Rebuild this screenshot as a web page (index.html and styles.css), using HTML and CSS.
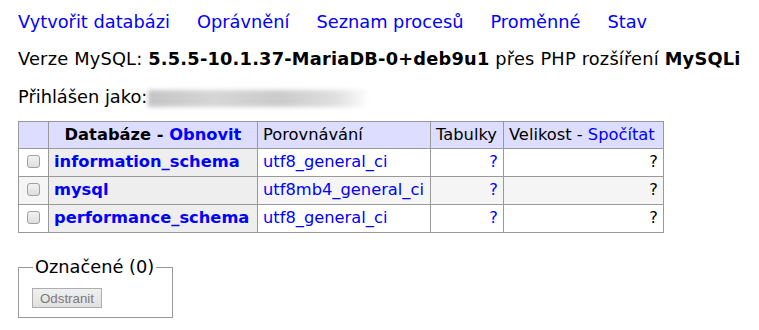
FILE: index.html
```html
<!DOCTYPE html>
<html lang="cs">
<head>
<meta charset="utf-8">
<link rel="stylesheet" href="styles.css">
</head>
<body>
<div class="content">
  <p class="links">
    <a href="#">Vytvořit databázi</a>
    <a href="#">Oprávnění</a>
    <a href="#">Seznam procesů</a>
    <a href="#">Proměnné</a>
    <a href="#">Stav</a>
  </p>
  <p class="line ver">Verze MySQL: <b>5.5.5-10.1.37-MariaDB-0+deb9u1</b> přes PHP rozšíření <b>MySQLi</b></p>
  <p class="line who">Přihlášen jako:<span class="blur"></span></p>
  <table class="dbs">
    <thead>
      <tr>
        <td class="chk"></td>
        <th class="dbh">Databáze - <a href="#">Obnovit</a></th>
        <td class="c-coll">Porovnávání</td>
        <td class="c-tab">Tabulky</td>
        <td class="c-size">Velikost - <a href="#">Spočítat</a></td>
      </tr>
    </thead>
    <tbody>
      <tr>
        <td class="chk"><span class="cb"></span></td>
        <th><a href="#">information_schema</a></th>
        <td><a href="#">utf8_general_ci</a></td>
        <td class="num"><a href="#">?</a></td>
        <td class="num">?</td>
      </tr>
      <tr class="odd">
        <td class="chk"><span class="cb"></span></td>
        <th><a href="#">mysql</a></th>
        <td><a href="#">utf8mb4_general_ci</a></td>
        <td class="num"><a href="#">?</a></td>
        <td class="num">?</td>
      </tr>
      <tr>
        <td class="chk"><span class="cb"></span></td>
        <th><a href="#">performance_schema</a></th>
        <td><a href="#">utf8_general_ci</a></td>
        <td class="num"><a href="#">?</a></td>
        <td class="num">?</td>
      </tr>
    </tbody>
  </table>
  <fieldset class="sel">
    <legend>Označené (0)</legend>
    <button class="btn" disabled>Odstranit</button>
  </fieldset>
</div>
</body>
</html>
```
FILE: styles.css
```css
html, body {
  margin: 0;
  padding: 0;
  background: #fff;
}
body {
  font-family: "DejaVu Sans", Verdana, sans-serif;
  font-size: 17.8px;
  line-height: 22px;
  color: #000;
}
.content {
  padding: 11px 18px;
}
a {
  color: #00f;
  text-decoration: none;
}
.links {
  margin: 0;
  display: flex;
  gap: 27px;
}
.line {
  margin: 15px 0 0;
  white-space: nowrap;
}
.who {
  margin-top: 16px;
}
.ver {
  letter-spacing: 0.2px;
}
.blur {
  display: inline-block;
  vertical-align: middle;
  width: 218px;
  height: 17px;
  margin-left: 1px;
  background: linear-gradient(90deg, #c4c4c4, #d6d6d6 30%, #cbcbcb 60%, #dedede 85%, #fafafa);
  filter: blur(2px);
}
.dbs {
  margin-top: 13px;
  border-collapse: collapse;
  border: 1px solid #999;
  font-size: 16.3px;
}
.dbs td, .dbs th {
  border: 1px solid #999;
  padding: 3px 5px 4px;
  line-height: 20px;
  text-align: left;
  font-weight: normal;
  white-space: nowrap;
}
.dbs thead td, .dbs thead th {
  background: #ddf;
  padding-bottom: 3px;
}
.dbs thead th.dbh {
  font-weight: bold;
  text-align: center;
  width: 198px;
}
.c-coll { width: 162px; }
.c-tab { width: 62px; }
.c-size { width: 149px; }
.dbs tbody th {
  background: #eee;
  font-weight: bold;
}
.dbs tbody tr.odd td {
  background: #f5f5f5;
}
.dbs .chk {
  width: 19px;
  text-align: center;
}
.dbs .num {
  text-align: right;
}
.cb {
  display: inline-block;
  width: 11px;
  height: 11px;
  border: 1px solid #a0a0a0;
  border-radius: 3px;
  background: linear-gradient(#f2f2f2, #dddddd);
  vertical-align: middle;
  margin-top: -3px;
}
.sel {
  margin: 23px 0 0;
  border: 1px solid #999;
  padding: 10px 12px 9px 13px;
  width: 128px;
  box-sizing: content-box;
}
.sel legend {
  padding: 0 2px;
  margin-left: 1px;
  line-height: 22px;
}
.btn {
  display: block;
  box-sizing: border-box;
  font-family: "Liberation Sans", Arial, sans-serif;
  font-size: 13.3px;
  color: #7a7a7a;
  background: linear-gradient(#f0f0f0, #e0e0e0);
  border: 1px solid #adadad;
  border-radius: 0;
  padding: 0 7px;
  width: 70px;
  height: 20px;
  margin: 0;
}
```
